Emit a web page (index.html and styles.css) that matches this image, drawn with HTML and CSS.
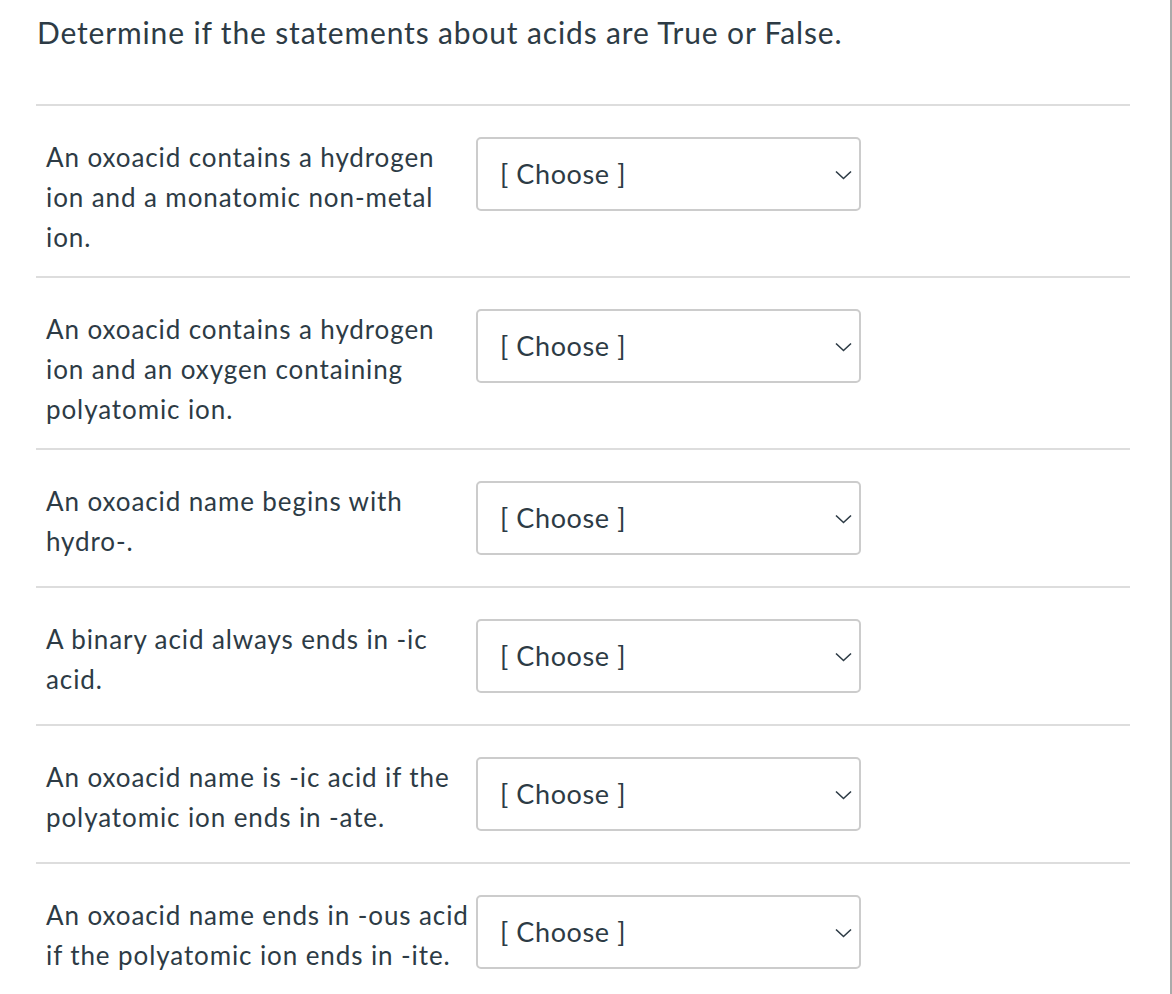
FILE: index.html
```html
<!DOCTYPE html>
<html>
<head>
<meta charset="utf-8">
<link rel="stylesheet" href="styles.css">
</head>
<body>
<div class="page">
  <div class="question">
    <p class="prompt">Determine if the statements about acids are True or False.</p>
    <div class="answers">
      <div class="answer">
        <div class="statement">An oxoacid contains a hydrogen ion and a monatomic non-metal ion.</div>
        <div class="select"><span class="select-text">[ Choose ]</span><svg class="chev" width="17" height="10" viewBox="0 0 17 10"><path d="M1 1.5 L8.5 8.5 L16 1.5" fill="none" stroke="#2d3b45" stroke-width="1.6"/></svg></div>
      </div>
      <div class="answer">
        <div class="statement">An oxoacid contains a hydrogen ion and an oxygen containing polyatomic ion.</div>
        <div class="select"><span class="select-text">[ Choose ]</span><svg class="chev" width="17" height="10" viewBox="0 0 17 10"><path d="M1 1.5 L8.5 8.5 L16 1.5" fill="none" stroke="#2d3b45" stroke-width="1.6"/></svg></div>
      </div>
      <div class="answer">
        <div class="statement">An oxoacid name begins with hydro-.</div>
        <div class="select"><span class="select-text">[ Choose ]</span><svg class="chev" width="17" height="10" viewBox="0 0 17 10"><path d="M1 1.5 L8.5 8.5 L16 1.5" fill="none" stroke="#2d3b45" stroke-width="1.6"/></svg></div>
      </div>
      <div class="answer">
        <div class="statement">A binary acid always ends in -ic acid.</div>
        <div class="select"><span class="select-text">[ Choose ]</span><svg class="chev" width="17" height="10" viewBox="0 0 17 10"><path d="M1 1.5 L8.5 8.5 L16 1.5" fill="none" stroke="#2d3b45" stroke-width="1.6"/></svg></div>
      </div>
      <div class="answer">
        <div class="statement">An oxoacid name is -ic acid if the polyatomic ion ends in -ate.</div>
        <div class="select"><span class="select-text">[ Choose ]</span><svg class="chev" width="17" height="10" viewBox="0 0 17 10"><path d="M1 1.5 L8.5 8.5 L16 1.5" fill="none" stroke="#2d3b45" stroke-width="1.6"/></svg></div>
      </div>
      <div class="answer">
        <div class="statement">An oxoacid name ends in -ous acid if the polyatomic ion ends in -ite.</div>
        <div class="select"><span class="select-text">[ Choose ]</span><svg class="chev" width="17" height="10" viewBox="0 0 17 10"><path d="M1 1.5 L8.5 8.5 L16 1.5" fill="none" stroke="#2d3b45" stroke-width="1.6"/></svg></div>
      </div>
    </div>
  </div>
</div>
</body>
</html>
```
FILE: styles.css
```css
html, body {
  margin: 0;
  padding: 0;
  background: #fff;
}
body {
  font-family: Lato, "Open Sans", sans-serif;
  color: #2d3b45;
  overflow: hidden;
}
.page {
  width: 1170px;
  height: 994px;
  border-right: 2px solid #aaaaaa;
}
.question {
  padding-left: 36px;
  width: 1094px;
}
.prompt {
  margin: 0;
  padding: 12px 0 0 1px;
  font-size: 30px;
  letter-spacing: 0.85px;
  line-height: 40px;
  height: 92px;
}
.answers {
  display: flex;
  flex-direction: column;
}
.answer {
  display: flex;
  align-items: flex-start;
  border-top: 2px solid #dddddd;
  padding: 31px 0 19px 10px;
}
.statement {
  width: 426px;
  font-size: 26px;
  letter-spacing: 0.9px;
  line-height: 40px;
}
.select {
  margin-left: 4px;
  margin-bottom: 12px;
  height: 70px;
  width: 352px;
  border: 2px solid #cccccc;
  border-radius: 5px;
  display: flex;
  align-items: center;
  justify-content: space-between;
  padding: 0 7px 0 22px;
  box-sizing: content-box;
}
.select-text {
  font-size: 27px;
  letter-spacing: 0.6px;
  line-height: 40px;
}
.chev {
  display: block;
  margin-top: 2px;
}
```
